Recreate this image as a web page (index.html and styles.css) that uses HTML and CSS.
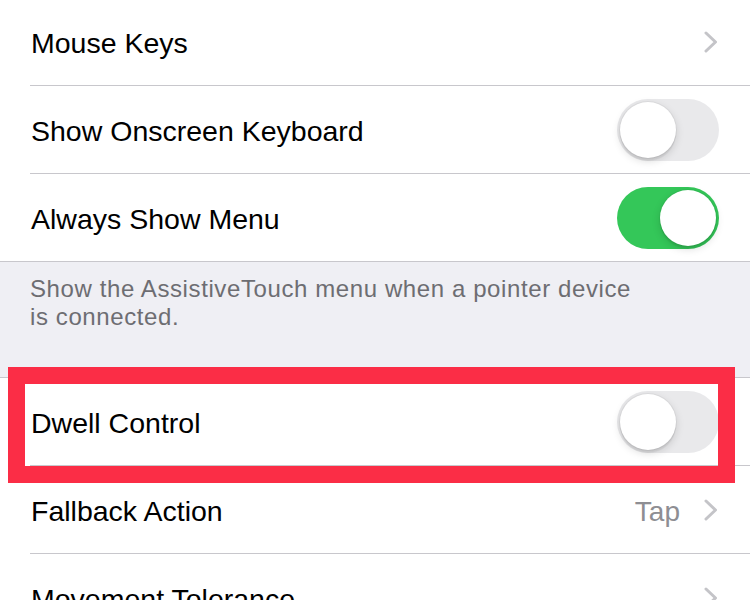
FILE: index.html
```html
<!DOCTYPE html>
<html>
<head>
<meta charset="utf-8">
<link rel="stylesheet" href="styles.css">
</head>
<body>
<div class="screen">
  <div class="group first">
    <div class="row">
      <div class="cell inset">
        <span class="label">Mouse Keys</span>
        <span class="accessory">
          <svg class="chev" viewBox="0 0 14 22" width="14" height="22"><path d="M2 2 L11.5 11 L2 20" fill="none" stroke="#c4c4c8" stroke-width="3" stroke-linecap="round" stroke-linejoin="round"/></svg>
        </span>
      </div>
    </div>
    <div class="row">
      <div class="cell inset">
        <span class="label">Show Onscreen Keyboard</span>
        <span class="toggle off"><span class="knob"></span></span>
      </div>
    </div>
    <div class="row">
      <div class="cell">
        <span class="label">Always Show Menu</span>
        <span class="toggle on"><span class="knob"></span></span>
      </div>
    </div>
  </div>
  <div class="footer">Show the AssistiveTouch menu when a pointer device<br>is connected.</div>
  <div class="group">
    <div class="row">
      <div class="cell inset">
        <span class="label">Dwell Control</span>
        <span class="toggle off"><span class="knob"></span></span>
      </div>
    </div>
    <div class="row">
      <div class="cell inset">
        <span class="label">Fallback Action</span>
        <span class="accessory">
          <span class="value">Tap</span>
          <svg class="chev" viewBox="0 0 14 22" width="14" height="22"><path d="M2 2 L11.5 11 L2 20" fill="none" stroke="#c4c4c8" stroke-width="3" stroke-linecap="round" stroke-linejoin="round"/></svg>
        </span>
      </div>
    </div>
    <div class="row">
      <div class="cell">
        <span class="label">Movement Tolerance</span>
        <span class="accessory">
          <svg class="chev" viewBox="0 0 14 22" width="14" height="22"><path d="M2 2 L11.5 11 L2 20" fill="none" stroke="#c4c4c8" stroke-width="3" stroke-linecap="round" stroke-linejoin="round"/></svg>
        </span>
      </div>
    </div>
  </div>
  <div class="highlight"></div>
</div>
</body>
</html>
```

FILE: styles.css
```css
html, body {
  margin: 0;
  padding: 0;
  background: #efeff4;
}
.screen {
  position: relative;
  width: 750px;
  height: 600px;
  overflow: hidden;
  font-family: "Liberation Sans", Arial, sans-serif;
}
.group {
  background: #ffffff;
  border-top: 1px solid #c8c7cc;
  border-bottom: 1px solid #c8c7cc;
}
.group.first {
  margin-top: -3px;
}
.row {
  padding-left: 30px;
}
.cell {
  height: 87px;
  display: flex;
  align-items: center;
  justify-content: space-between;
  padding-right: 31px;
}
.cell.inset {
  border-bottom: 1px solid #c8c7cc;
}
.label {
  font-size: 28.5px;
  color: #000000;
  padding-left: 1px;
  margin-top: 4px;
}
.accessory {
  display: flex;
  align-items: center;
  gap: 24px;
  padding-right: 1px;
}
.value {
  font-size: 28px;
  color: #8e8e93;
  margin-top: 4px;
}
.chev {
  display: block;
}
.toggle {
  position: relative;
  width: 102px;
  height: 62px;
  border-radius: 31px;
  box-sizing: border-box;
}
.toggle.off {
  background: #e9e9eb;
}
.toggle.on {
  background: #34c759;
}
.knob {
  position: absolute;
  top: 3px;
  width: 56px;
  height: 56px;
  border-radius: 50%;
  background: #ffffff;
  box-shadow: 0 3px 8px rgba(0,0,0,0.15), 0 3px 1px rgba(0,0,0,0.06), 0 0 0 1px rgba(0,0,0,0.04);
}
.toggle.off .knob {
  left: 3px;
}
.toggle.on .knob {
  right: 3px;
}
.footer {
  height: 89px;
  padding: 13px 30px 13px 30px;
  font-size: 24px;
  letter-spacing: 0.6px;
  line-height: 28px;
  color: #6d6d72;
}
.highlight {
  position: absolute;
  left: 8px;
  top: 367px;
  width: 727px;
  height: 116px;
  box-sizing: border-box;
  border: 17px solid #fb2d46;
}
```
